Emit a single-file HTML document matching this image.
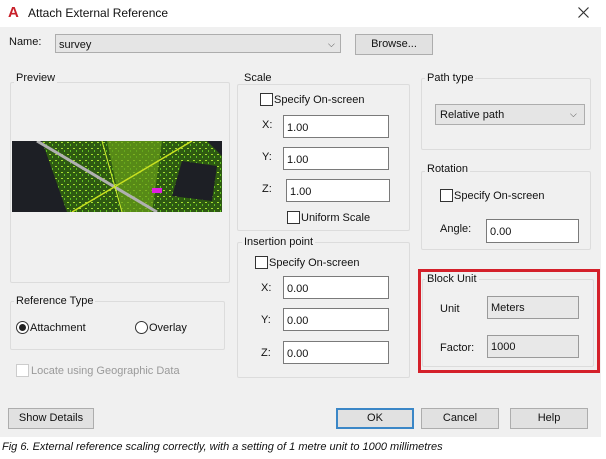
<!DOCTYPE html>
<html><head><style>
*{box-sizing:border-box;margin:0;padding:0}
body{width:606px;height:459px;background:#fff;position:relative;overflow:hidden;font-family:"Liberation Sans",sans-serif;font-size:11px;color:#111}
div,span{position:absolute}
.dlg{left:0;top:27px;width:601px;height:410px;background:#f0f0f0}
.grp{border:1px solid #dcdcdc;border-radius:2px}
.lbl{background:#f0f0f0;padding:0 2px;line-height:12px}
.in{background:#fff;border:1px solid #7a7a7a;padding:6px 0 0 3px;line-height:12px}
.ro{background:#e8e8e8;border:1px solid #9a9a9a;padding:5px 0 0 3px;line-height:12px}
.cb{width:13px;height:13px;border:1px solid #333;background:#fff}
.btn{background:#e1e1e1;border:1px solid #adadad;text-align:center;line-height:19px}
.t{line-height:12px;white-space:nowrap}
</style></head><body>
<span class="t" style="left:8px;top:5px;color:#c8202a;font-weight:bold;font-size:15px;line-height:16px">A</span>
<span class="t" style="left:28px;top:6px;font-size:12px;line-height:14px">Attach External Reference</span>
<svg style="position:absolute;left:578px;top:7px" width="11" height="11"><path d="M0.5 0.5L10.5 10.5M10.5 0.5L0.5 10.5" stroke="#333" stroke-width="1.2"/></svg>
<div class="dlg"></div>
<span class="t" style="left:9px;top:36px">Name:</span>
<div style="left:55px;top:34px;width:286px;height:19px;background:#e5e5e5;border:1px solid #adadad"></div>
<span class="t" style="left:59px;top:39px">survey</span>
<span class="t" style="left:328px;top:38px;font-size:9px;color:#444">⌵</span>
<div class="btn" style="left:355px;top:34px;width:78px;height:21px">Browse...</div>

<div class="grp" style="left:10px;top:82px;width:220px;height:201px"></div>
<span class="lbl" style="left:14px;top:72px">Preview</span>
<div style="left:12px;top:141px;width:210px;height:71px;background:#1d1f25;overflow:hidden">
<svg width="210" height="71" style="position:absolute;left:0;top:0">
<defs><pattern id="p" width="6" height="6" patternUnits="userSpaceOnUse"><rect width="6" height="6" fill="#2e5a12"/><rect x="1" y="1" width="2" height="1" fill="#a8e030"/><rect x="4" y="3" width="1" height="2" fill="#60c020"/></pattern></defs>
<polygon points="30,0 210,0 210,71 55,71" fill="url(#p)"/>
<polygon points="95,0 150,0 140,71 110,71" fill="#6a9e1a" opacity="0.7"/>
<polygon points="170,20 205,25 200,60 160,55" fill="#1d1f25"/>
<polygon points="195,0 210,0 210,15" fill="#1d1f25"/>
<line x1="25" y1="0" x2="145" y2="71" stroke="#b0b0b0" stroke-width="3"/>
<line x1="60" y1="71" x2="180" y2="0" stroke="#c8e020" stroke-width="1.5"/>
<line x1="90" y1="0" x2="110" y2="71" stroke="#d0f030" stroke-width="1"/>
<rect x="140" y="47" width="10" height="5" fill="#e020e0"/>
</svg></div>

<div class="grp" style="left:237px;top:84px;width:173px;height:147px"></div>
<span class="lbl" style="left:242px;top:72px">Scale</span>
<div class="cb" style="left:260px;top:93px"></div><span class="t" style="left:274px;top:94px">Specify On-screen</span>
<span class="t" style="left:262px;top:119px">X:</span><div class="in" style="left:283px;top:115px;width:106px;height:23px">1.00</div>
<span class="t" style="left:262px;top:151px">Y:</span><div class="in" style="left:283px;top:147px;width:106px;height:23px">1.00</div>
<span class="t" style="left:262px;top:183px">Z:</span><div class="in" style="left:286px;top:179px;width:104px;height:23px">1.00</div>
<div class="cb" style="left:287px;top:211px"></div><span class="t" style="left:301px;top:212px">Uniform Scale</span>

<div class="grp" style="left:237px;top:242px;width:173px;height:136px"></div>
<span class="lbl" style="left:242px;top:236px">Insertion point</span>
<div class="cb" style="left:255px;top:256px"></div><span class="t" style="left:269px;top:257px">Specify On-screen</span>
<span class="t" style="left:261px;top:282px">X:</span><div class="in" style="left:283px;top:276px;width:106px;height:23px">0.00</div>
<span class="t" style="left:261px;top:314px">Y:</span><div class="in" style="left:283px;top:308px;width:106px;height:23px">0.00</div>
<span class="t" style="left:261px;top:347px">Z:</span><div class="in" style="left:283px;top:341px;width:106px;height:23px">0.00</div>

<div class="grp" style="left:421px;top:78px;width:170px;height:72px"></div>
<span class="lbl" style="left:425px;top:72px">Path type</span>
<div style="left:435px;top:104px;width:150px;height:21px;background:#e5e5e5;border:1px solid #adadad"></div>
<span class="t" style="left:440px;top:109px">Relative path</span>
<span class="t" style="left:570px;top:108px;font-size:9px;color:#444">⌵</span>

<div class="grp" style="left:421px;top:171px;width:170px;height:79px"></div>
<span class="lbl" style="left:425px;top:163px">Rotation</span>
<div class="cb" style="left:440px;top:189px"></div><span class="t" style="left:454px;top:190px">Specify On-screen</span>
<span class="t" style="left:440px;top:223px">Angle:</span><div class="in" style="left:486px;top:219px;width:93px;height:24px">0.00</div>

<div style="left:418px;top:269px;width:182px;height:104px;border:3px solid #d4202a"></div>
<div class="grp" style="left:422px;top:279px;width:172px;height:88px"></div>
<span class="lbl" style="left:425px;top:273px">Block Unit</span>
<span class="t" style="left:440px;top:303px">Unit</span><div class="ro" style="left:487px;top:296px;width:92px;height:23px">Meters</div>
<span class="t" style="left:440px;top:342px">Factor:</span><div class="ro" style="left:487px;top:335px;width:92px;height:23px">1000</div>

<div class="grp" style="left:10px;top:301px;width:215px;height:49px"></div>
<span class="lbl" style="left:14px;top:295px">Reference Type</span>
<div style="left:16px;top:321px;width:13px;height:13px;border:1px solid #333;border-radius:50%;background:#fff"></div>
<div style="left:19px;top:324px;width:7px;height:7px;border-radius:50%;background:#222"></div>
<span class="t" style="left:30px;top:322px">Attachment</span>
<div style="left:135px;top:321px;width:13px;height:13px;border:1px solid #333;border-radius:50%;background:#fff"></div>
<span class="t" style="left:149px;top:322px">Overlay</span>
<div class="cb" style="left:16px;top:364px;border-color:#ccc"></div><span class="t" style="left:31px;top:365px;color:#9a9a9a">Locate using Geographic Data</span>

<div class="btn" style="left:8px;top:408px;width:86px;height:21px">Show Details</div>
<div class="btn" style="left:336px;top:408px;width:78px;height:21px;border:2px solid #3b87c7;line-height:17px">OK</div>
<div class="btn" style="left:421px;top:408px;width:78px;height:21px">Cancel</div>
<div class="btn" style="left:510px;top:408px;width:78px;height:21px">Help</div>

<span class="t" style="left:2px;top:440px;font-style:italic;font-size:11px;line-height:14px">Fig 6. External reference scaling correctly, with a setting of 1 metre unit to 1000 millimetres</span>
</body></html>
